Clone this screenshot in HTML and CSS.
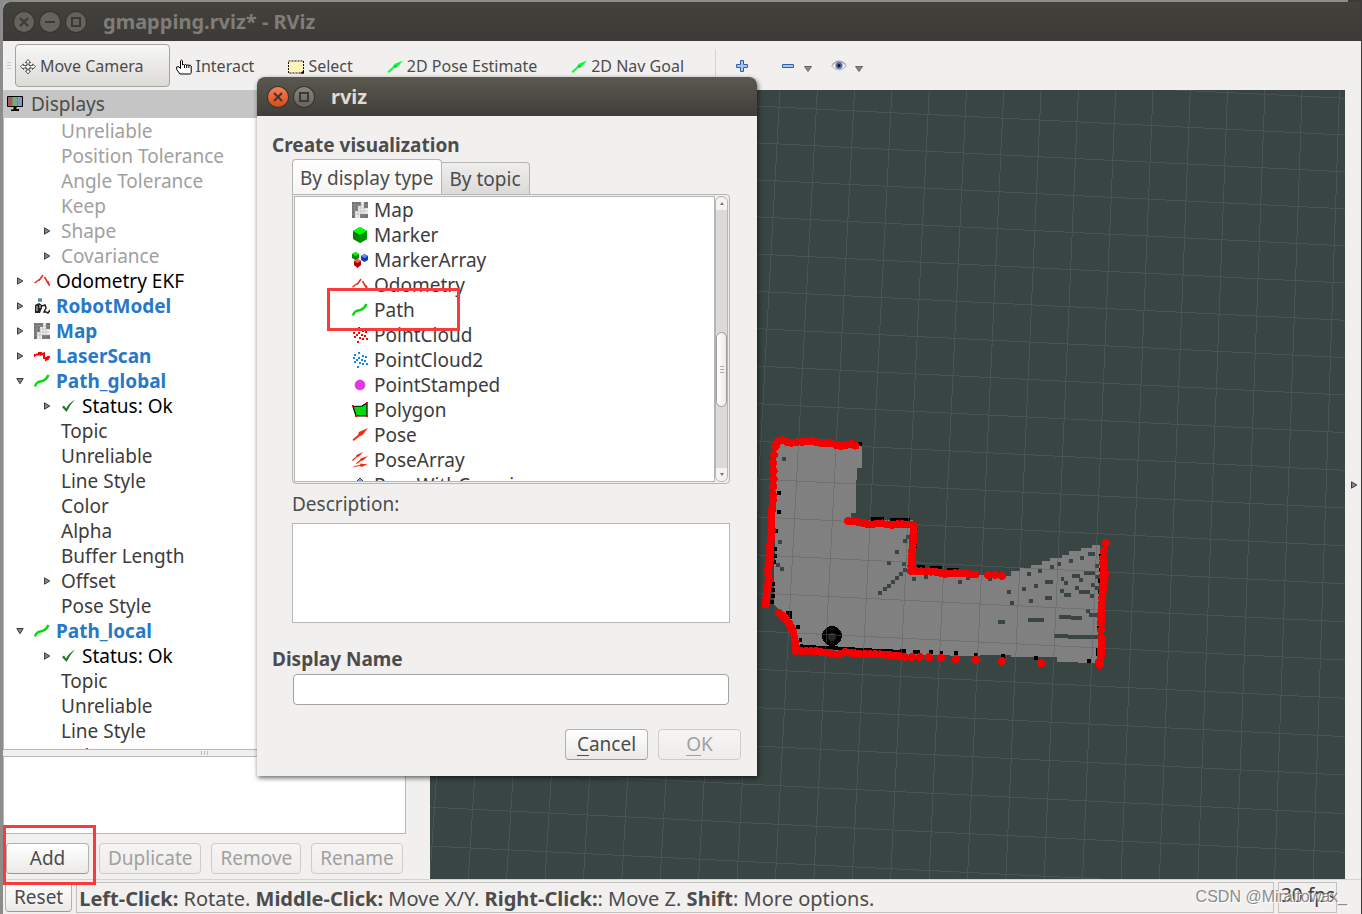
FILE: index.html
```
<!DOCTYPE html>
<html lang="en">
<head>
    <meta charset="UTF-8">
    <meta name="viewport" content="width=device-width, initial-scale=1.0">
    <title>gmapping.rviz* - RViz</title>
    <link rel="stylesheet" href="styles.css">
</head>
<body>
    <!-- icon set -->
    <svg class="defs" aria-hidden="true">
        <symbol id="i-close" viewBox="0 0 20 20"><path d="M6 6l8 8M14 6l-8 8" fill="none" stroke="currentColor" stroke-width="2"/></symbol>
        <symbol id="i-min" viewBox="0 0 20 20"><path d="M5 10h10" fill="none" stroke="currentColor" stroke-width="2"/></symbol>
        <symbol id="i-max" viewBox="0 0 20 20"><path d="M6 6h8v8H6z" fill="none" stroke="currentColor" stroke-width="2"/></symbol>
        <symbol id="i-right" viewBox="0 0 8 8"><path d="M1.5 .8v6.4L6.800 4z" fill="#888" stroke="#3c3c3c"/></symbol>
        <symbol id="i-down" viewBox="0 0 8 8"><path d="M.8 1.500h6.400L4 6.800z" fill="#888" stroke="#3c3c3c"/></symbol>
        <symbol id="i-move" viewBox="0 0 16 16"><path d="M8 .5L5.500 3.500h1.500V6.500H3.500V5L.5 7.500l3 3V9H7v3H5.500L8 15l2.500-3H9V9h3.500v1.500l3-3-3-2.500v1.500H9V3.500h1.500z" fill="#fff" stroke="#333" stroke-width=".8"/><circle cx="8" cy="8" r="2.500" fill="none" stroke="#555" stroke-width=".7"/></symbol>
        <symbol id="i-hand" viewBox="0 0 16 16"><path d="M4.500 9.500V1.800q1-1.600 2 0V6q1-1 2 0 1-.8 2.200.2 1.100-.8 2.200.2 1.500-.7 2.300.6v6.500q0 1.500-1.500 1.500H4L.7 10.500V8q1.300-.8 2.300 0z" fill="#fff" stroke="#000"/><path d="M8.500 6v3M10.700 6.200V9M12.900 6.400V9" stroke="#000"/></symbol>
        <symbol id="i-select" viewBox="0 0 16 16"><path d="M.5 2h15v12H.5z" fill="#fdf3bb" stroke="#111" stroke-dasharray="2 1"/><path d="M12 14.500h4V11z"/></symbol>
        <symbol id="i-goal" viewBox="0 0 16 16"><path d="M.5 12.500L6 7.500l1-.5.500-2L16 1.500 10.500 8l-2.500.5L1.500 14z" fill="#0f3"/><path d="M7 6.500l2 2" stroke="#085020"/></symbol>
        <symbol id="i-plus" viewBox="0 0 16 16"><path d="M6.500 2.500h3v4h4v3h-4v4h-3v-4h-4v-3h4z" fill="#a9c6ea" stroke="#2d62ab"/></symbol>
        <symbol id="i-minus" viewBox="0 0 16 16"><path d="M2.500 6.500h11v3h-11z" fill="#a9c6ea" stroke="#2d62ab"/></symbol>
        <symbol id="i-eye" viewBox="0 0 16 16"><path d="M.5 8Q8-1 15.500 8 8 16 .5 8z" fill="#eee" stroke="#b5b5b5"/><circle cx="8" cy="7.500" r="3.500" fill="#5b6cae"/><circle cx="8" cy="7.500" r="1.500" fill="#111"/><path d="M1 6.500Q8-.5 15 6.500" fill="none" stroke="#999"/></symbol>
        <symbol id="i-caret" viewBox="0 0 8 8"><path d="M.5 1.500h7L4 6.500z" fill="#888" stroke="#666"/></symbol>
        <symbol id="i-displays" viewBox="0 0 16 16"><path d="M.5.5h15v10H.5z" fill="#a35c5c" stroke="#000"/><path d="M5.500 1H10v9H5.500z" fill="#69b569"/><path d="M10.500 1H15v9h-4.500z" fill="#8e8ed2"/><path d="M6.500 11h3v2h2.500v2H4v-1.500h2.500z"/></symbol>
        <symbol id="i-odom" viewBox="0 0 16 16"><path d="M.5 10L6 6M5 7.500l4-5.500M10.500 4L15.500 12.500" fill="none" stroke="#f32a12" stroke-width="1.500"/><path d="M11.500 7.500l4.500 6-1-5z" fill="#f32a12"/></symbol>
        <symbol id="i-robot" viewBox="0 0 16 16"><path d="M4 .5h4v3H4z" fill="#223f86"/><path d="M4 2h4" stroke="#9fc3ee"/><path d="M1 7l4-2 3 2v3l-2 5H1z" fill="#222"/><path d="M3 8v5M6 7v3" stroke="#ddd"/><path d="M8 8l3-1 1 3-2 4h2l2 1 2-3" fill="none" stroke="#222" stroke-width="1.500"/></symbol>
        <symbol id="i-map" viewBox="0 0 16 16"><path d="M0 0h16v16H0z" fill="#f0f0f0"/><path d="M0 0h9v4H6v5H3v7H0zM12 0h4v6h-4zM8 12h8v4H8z" fill="#707070"/><path d="M3 0v16M6 0v16M9 0v16M12 0v16M0 3h16M0 6h16M0 9h16M0 12h16" stroke="#aaa" stroke-width=".5"/></symbol>
        <symbol id="i-laser" viewBox="0 0 16 16"><path d="M0 9V7h2M2 6.500h3V5h2v1.500l3-1V10h2v2l2-1V9h2" fill="none" stroke="red" stroke-width="2"/></symbol>
        <symbol id="i-path" viewBox="0 0 16 16"><path d="M1 13.500C3 7 6 9.500 9.500 7.500 12 6.500 13 5 14.500 2" fill="none" stroke="#00dc0a" stroke-width="2.500"/></symbol>
        <symbol id="i-ok" viewBox="0 0 16 16"><path d="M1 9l2-1.500L5 10.500Q8 5 14 1.500 9 6.500 5.500 14z" fill="#1f7a26"/></symbol>
        <symbol id="i-marker" viewBox="0 0 16 16"><path d="M8 0l7 4v8l-7 4-7-4V4z" fill="#008200"/><path d="M8 0l7 4-7 4-7-4z" fill="#0f0"/><path d="M8 8l7-4v8l-7 4z" fill="#009600"/></symbol>
        <symbol id="i-markers" viewBox="0 0 16 16"><path d="M3.500 0L7 2v4L3.500 8 0 6V2z" fill="#008c00"/><path d="M3.500 0L7 2 3.500 4 0 2z" fill="#0f0"/><path d="M12.500 2L16 4v4l-3.500 2L9 8V4z" fill="#1338b8"/><path d="M12.500 2L16 4l-3.500 2L9 4z" fill="#5c8cff"/><path d="M5.500 7L9 9v4l-3.500 3L2 13V9z" fill="#b00000"/><path d="M5.500 7L9 9l-3.500 2L2 9z" fill="#ff5a5a"/></symbol>
        <symbol id="i-cloud" viewBox="0 0 16 16"><path d="M6 1h2M2 3h2M10 4h2M1 6h2M6 6h2M13 5h2M4 8h2M9 8h2M2 10h2M12 9h2M7 11h2M10 12h2M14 12h2M5 15h2" stroke="currentColor" stroke-width="2"/></symbol>
        <symbol id="i-point" viewBox="0 0 16 16"><circle cx="8" cy="8" r="5" fill="#e935e9" stroke="#c22bc2" stroke-width=".6"/></symbol>
        <symbol id="i-polygon" viewBox="0 0 16 16"><path d="M1 4.500l9-.5 5-3v13H4z" fill="#00dc0a" stroke="#000" stroke-width="1.200"/><path d="M0 4h2M14 1h2M3 14h2M14 14h2" stroke="red" stroke-width="2"/></symbol>
        <symbol id="i-pose" viewBox="0 0 16 16"><path d="M.5 12.500L6 8l1-3 9-4-5.500 7L8 9l-6.500 5z" fill="#f32a12"/></symbol>
        <symbol id="i-poses" viewBox="0 0 16 16"><path d="M0 8l4-3.500.5-1.500L11 0 7 4.500l-2 .5-4 4zM4 11l4-3 .5-1.500L16 4l-5 4.500-2 .5-4.500 3zM2 14l6-1 .5-1.500 7 1-6 2.500-1.500-1-6 1z" fill="#f32a12"/></symbol>
        <symbol id="i-cov" viewBox="0 0 16 16"><path d="M8 1l6 6-6 6-6-6z" fill="#8fa2cc" stroke="#31487f"/></symbol>
    </svg>

    <div class="window">
        <header class="titlebar">
            <button class="wm" aria-label="Close"><svg><use href="#i-close"/></svg></button>
            <button class="wm" aria-label="Minimize"><svg><use href="#i-min"/></svg></button>
            <button class="wm" aria-label="Maximize"><svg><use href="#i-max"/></svg></button>
            <h1>gmapping.rviz* - RViz</h1>
        </header>

        <div class="toolbar">
            <span class="handle"></span>
            <button class="tool active"><svg class="icon"><use href="#i-move"/></svg>Move Camera</button>
            <button class="tool"><svg class="icon"><use href="#i-hand"/></svg>Interact</button>
            <button class="tool"><svg class="icon"><use href="#i-select"/></svg>Select</button>
            <button class="tool"><svg class="icon"><use href="#i-goal"/></svg>2D Pose Estimate</button>
            <button class="tool"><svg class="icon"><use href="#i-goal"/></svg>2D Nav Goal</button>
            <span class="separator"></span>
            <button class="tool small" aria-label="Add tool"><svg class="icon"><use href="#i-plus"/></svg></button>
            <button class="tool small" aria-label="Remove tool"><svg class="icon"><use href="#i-minus"/></svg><svg class="caret"><use href="#i-caret"/></svg></button>
            <button class="tool small" aria-label="Visibility"><svg class="icon"><use href="#i-eye"/></svg><svg class="caret"><use href="#i-caret"/></svg></button>
        </div>

        <main class="main">
            <section class="displays">
                <h2 class="panel-title"><svg class="icon"><use href="#i-displays"/></svg>Displays</h2>
                <ul class="tree">
                    <li class="child off">Unreliable</li>
                    <li class="child off">Position Tolerance</li>
                    <li class="child off">Angle Tolerance</li>
                    <li class="child off">Keep</li>
                    <li class="child off"><button class="toggle" aria-label="Expand"><svg><use href="#i-right"/></svg></button>Shape</li>
                    <li class="child off"><button class="toggle" aria-label="Expand"><svg><use href="#i-right"/></svg></button>Covariance</li>
                    <li class="top plain"><button class="toggle" aria-label="Expand"><svg><use href="#i-right"/></svg></button><svg class="icon"><use href="#i-odom"/></svg>Odometry EKF</li>
                    <li class="top"><button class="toggle" aria-label="Expand"><svg><use href="#i-right"/></svg></button><svg class="icon"><use href="#i-robot"/></svg>RobotModel</li>
                    <li class="top"><button class="toggle" aria-label="Expand"><svg><use href="#i-right"/></svg></button><svg class="icon"><use href="#i-map"/></svg>Map</li>
                    <li class="top"><button class="toggle" aria-label="Expand"><svg><use href="#i-right"/></svg></button><svg class="icon"><use href="#i-laser"/></svg>LaserScan</li>
                    <li class="top"><button class="toggle" aria-label="Collapse"><svg><use href="#i-down"/></svg></button><svg class="icon"><use href="#i-path"/></svg>Path_global</li>
                    <li class="child status"><button class="toggle" aria-label="Expand"><svg><use href="#i-right"/></svg></button><svg class="icon"><use href="#i-ok"/></svg>Status: Ok</li>
                    <li class="child">Topic</li>
                    <li class="child">Unreliable</li>
                    <li class="child">Line Style</li>
                    <li class="child">Color</li>
                    <li class="child">Alpha</li>
                    <li class="child">Buffer Length</li>
                    <li class="child"><button class="toggle" aria-label="Expand"><svg><use href="#i-right"/></svg></button>Offset</li>
                    <li class="child">Pose Style</li>
                    <li class="top"><button class="toggle" aria-label="Collapse"><svg><use href="#i-down"/></svg></button><svg class="icon"><use href="#i-path"/></svg>Path_local</li>
                    <li class="child status"><button class="toggle" aria-label="Expand"><svg><use href="#i-right"/></svg></button><svg class="icon"><use href="#i-ok"/></svg>Status: Ok</li>
                    <li class="child">Topic</li>
                    <li class="child">Unreliable</li>
                    <li class="child">Line Style</li>
                    <li class="child">Color</li>
                </ul>
                <div class="splitter"><i></i><i></i><i></i></div>
                <div class="help-box"></div>
                <div class="actions">
                    <button class="btn">Add</button>
                    <button class="btn" disabled>Duplicate</button>
                    <button class="btn" disabled>Remove</button>
                    <button class="btn" disabled>Rename</button>
                    <span class="mark mark-add"></span>
                </div>
            </section>

            <svg class="view" viewBox="430 90 915 789" preserveAspectRatio="xMidYMid slice">
                <!-- free space -->
                <path fill="#808080" d="M776 443H862V468H857V480H856V513H851V520H913V572L1003 576 1011 576V571H1020V568H1031V565H1042V561H1050V558H1062V555H1069V551H1081V548H1092V545H1100L1098 663H1078V662H1057V657H1011V655H980V656L920 655 800 652 796 632 783 614 774 605Z"/>
                <!-- unknown cells -->
                <path class="cells unknown" d="M782 459h4M778 542h4M776 565h4M780 569h4M895 552h4M903 541h4M906 537h4M887 563h4M902 564h4M903 570h4M899 574h4M895 578h4M891 582h4M887 586h4M883 589h4M878 593h4M912 579h4M924 577h4M958 582h4M966 578h4M988 579h4M1007 592h4M1010 603h4M1022 589h4M1027 574h4M1034 586h4M1038 571h4M1029 601h4M1050 567h4M1057 564h4M1069 561h4M1080 558h4M1088 554h7M1045 582h8M1045 598h7M1061 579h3M1064 583h4M1072 576h8M1079 580h4M1060 591h4M1064 595h7M1075 588h4M1079 592h11M1091 585h4M1090 596h4M1084 573h11M1095 566h4M1095 577h4M1095 588h4M998 622h7M1028 620h16M1059 617h12M1071 618h11M1086 611h4M1089 615h9M1054 636h14M1068 637h30"/>
                <!-- obstacles -->
                <path class="cells wall" d="M858 444h4M777 493h4M777 512h4M775 531h3M774 549h3M774 556h3M773 562h3M771 584h4M771 590h4M771 596h4M770 602h4M786 613h6M788 617h4M796 627h4M799 640h3M800 646h3M870 519h14M890 520h20M915 530h3M914 546h3M917 567h8M930 568h12M947 570h12M1001 574h3M900 651h6M913 652h7M929 652h4M940 653h3M954 653h4M974 655h4M1001 656h4M1034 658h4M1087 661h4M1099 556h3M1099 570h3M1098 581h3M1098 592h3M1098 604h3M1097 616h3M1097 628h3M1096 650h3M1096 654h3"/>
                <path fill="none" stroke="#000" stroke-width="4" d="M802 647L830 648 880 651 905 652"/>
                <circle cx="832" cy="636" r="10"/>
                <circle cx="832" cy="637" r="4" fill="#252722"/>
                <path id="grid" class="grid"/>
                <!-- laser scan -->
                <g class="scan">
                    <path d="M776 446L778 441 784 440 789 443 800 442 811 441 820 443 830 443 840 446 850 444 857 446"/>
                    <path class="sparse" d="M775 447L774 456 773 464 774 474 773 490 773 500"/>
                    <path d="M773 500L771 520 772 530 770 545 770 560 768 570 769 580 767 590 766 600 766 607"/>
                    <path d="M779 613L785 618 791 626 794 635 796 645 796 651"/>
                    <path d="M796 651L815 651 830 653 838 655 845 652 860 654 875 654 890 655 905 657"/>
                    <path d="M848 521L860 522 870 525 880 523 890 525 900 524 914 525"/>
                    <path d="M914 526L913 540 912 555 911 571"/>
                    <path d="M911 571L940 572 942 574 960 573 980 575"/>
                    <path class="single" d="M988 575h0M995 575h0M1002 576h0M912 657h0M920 657h0M929 657h0M941 658h0M956 659h0M976 660h0M1002 661h0M1041 663h0"/>
                    <path class="sparse" d="M1106 543L1103 555 1105 574 1103 592 1101 612 1101 632 1102 649 1099 662"/>
                    <path d="M1103 558L1104 580 1102 600 1101 625M1102 640L1100 666"/>
                </g>
            </svg>
            <button class="side-toggle" aria-label="Show panel"><svg><use href="#i-right"/></svg></button>
        </main>

        <footer class="statusbar">
            <button class="btn reset">Reset</button>
            <p class="hint"><b>Left-Click:</b> Rotate. <b>Middle-Click:</b> Move X/Y. <b>Right-Click:</b>: Move Z. <b>Shift</b>: More options.</p>
            <span class="fps">30 fps</span>
            <span class="watermark">CSDN @Miraitowax_</span>
        </footer>
    </div>

    <div class="dialog" role="dialog" aria-labelledby="dialog-title">
        <header class="titlebar focused">
            <button class="wm close" aria-label="Close"><svg><use href="#i-close"/></svg></button>
            <button class="wm" aria-label="Maximize"><svg><use href="#i-max"/></svg></button>
            <h2 id="dialog-title">rviz</h2>
        </header>
        <form class="dialog-body">
            <h3>Create visualization</h3>
            <div class="group">
                <div class="tabs" role="tablist">
                    <button type="button" class="tab selected" role="tab" aria-selected="true">By display type</button>
                    <button type="button" class="tab" role="tab" aria-selected="false">By topic</button>
                </div>
                <div class="tab-page">
                    <ul class="types">
                        <li><svg class="icon"><use href="#i-map"/></svg>Map</li>
                        <li><svg class="icon"><use href="#i-marker"/></svg>Marker</li>
                        <li><svg class="icon"><use href="#i-markers"/></svg>MarkerArray</li>
                        <li><svg class="icon"><use href="#i-odom"/></svg>Odometry</li>
                        <li><svg class="icon"><use href="#i-path"/></svg>Path<span class="mark mark-path"></span></li>
                        <li><svg class="icon red"><use href="#i-cloud"/></svg>PointCloud</li>
                        <li><svg class="icon blue"><use href="#i-cloud"/></svg>PointCloud2</li>
                        <li><svg class="icon"><use href="#i-point"/></svg>PointStamped</li>
                        <li><svg class="icon"><use href="#i-polygon"/></svg>Polygon</li>
                        <li><svg class="icon"><use href="#i-pose"/></svg>Pose</li>
                        <li><svg class="icon"><use href="#i-poses"/></svg>PoseArray</li>
                        <li><svg class="icon"><use href="#i-cov"/></svg>PoseWithCovariance</li>
                    </ul>
                    <div class="scrollbar">
                        <span class="step up"></span>
                        <span class="thumb"><i></i><i></i><i></i></span>
                        <span class="step down"></span>
                    </div>
                </div>
                <label for="description">Description:</label>
                <textarea id="description" readonly></textarea>
            </div>
            <h3><label for="display-name">Display Name</label></h3>
            <div class="group">
                <input type="text" id="display-name">
            </div>
            <div class="dialog-buttons">
                <button type="button" class="btn"><u>C</u>ancel</button>
                <button type="submit" class="btn" disabled><u>O</u>K</button>
            </div>
        </form>
    </div>

    <script src="grid.js"></script>
</body>
</html>
```
FILE: styles.css
```
* {
    box-sizing: border-box;
}
body {
    margin: 0;
    height: 100vh;
    padding: 2px 1px 0 3px;
    overflow: hidden;
    background: linear-gradient(to right, #8c8c8c 99%, #3c3b37 99%);
    font-family: "Noto Sans", "Open Sans", sans-serif;
    font-size: 19px;
    line-height: 25px;
    color: #4c4c4c;
}
h1, h2, h3, p, ul {
    margin: 0;
    padding: 0;
    list-style: none;
}
button, input, textarea {
    font: inherit;
    color: inherit;
}
svg {
    display: block;
    flex: none;
}
.defs {
    position: absolute;
    width: 0;
    height: 0;
}
.icon {
    width: 16px;
    height: 16px;
}
.window {
    height: 100%;
    display: flex;
    flex-direction: column;
    background: #f1f0ee;
    border-top-left-radius: 6px;
}

/* title bars */
.titlebar {
    display: flex;
    align-items: center;
    gap: 6px;
    height: 39px;
    padding: 0 11px;
    background: linear-gradient(#42413c, #3c3b37);
    border-radius: 7px 0 0 0;
    color: #807d78;
}
.titlebar h1, .titlebar h2 {
    margin-left: 11px;
    font-size: 20px;
    font-weight: bold;
    line-height: 24px;
}
.wm {
    width: 20px;
    height: 20px;
    padding: 0;
    border: 0;
    border-radius: 50%;
    background: #64625d;
    box-shadow: 0 0 0 1px #35342f;
    color: #3a3935;
}
.wm svg {
    width: 20px;
    height: 20px;
}
.titlebar.focused {
    background: linear-gradient(#5b584f, #3f3e39);
    border-radius: 8px 8px 0 0;
    color: #dfdbd2;
}
.focused .wm {
    background: linear-gradient(#87857e, #65635d);
}
.focused .close {
    background: linear-gradient(#f5805b, #dd4814);
}

/* toolbar */
.toolbar {
    display: flex;
    align-items: center;
    height: 49px;
    padding: 0 4px;
}
.handle {
    width: 4px;
    height: 8px;
    margin-right: 4px;
    background: repeating-linear-gradient(#ccc 0 1px, transparent 1px 3px);
}
.tool {
    display: flex;
    align-items: center;
    gap: 4px;
    height: 43px;
    padding: 2px 27px 0 5px;
    border: 1px solid transparent;
    border-radius: 4px;
    background: none;
    font-size: 16px;
    white-space: nowrap;
}
.tool.active {
    padding: 2px 25px 0 4px;
    border-color: #a5a39f;
    background: linear-gradient(#f8f8f7, #dcdad7);
}
.separator {
    height: 33px;
    margin: 0 13px 0 3px;
    border-left: 1px solid #d5d3d0;
}
.tool.small {
    gap: 8px;
    padding: 0 13px 0 4px;
}
.tool.small:nth-last-child(3) {
    padding-right: 24px;
}
.caret {
    width: 8px;
    height: 8px;
    margin-top: 6px;
}

/* displays panel */
.main {
    flex: 1;
    min-height: 0;
    display: flex;
}
.displays {
    width: 427px;
    padding-right: 24px;
    display: flex;
    flex-direction: column;
}
.panel-title {
    display: flex;
    align-items: center;
    gap: 8px;
    height: 28px;
    padding-left: 4px;
    background: #c5c5c5;
    font-size: 19px;
    font-weight: normal;
}
.tree {
    flex: 1;
    min-height: 0;
    overflow: hidden;
    border: 1px solid #bab8b5;
    border-top: 0;
    background: #fff;
    color: #3c3c3c;
}
.tree li, .types li {
    display: flex;
    align-items: center;
    height: 25px;
    padding-top: 2px;
    white-space: nowrap;
}
.tree .icon, .types .icon, .toggle {
    margin-top: -2px;
}
.tree .top {
    gap: 6px;
    padding-left: 12px;
    font-weight: bold;
    color: #2878c8;
}
.tree .top .toggle {
    margin-right: 4px;
}
.tree .top.plain {
    font-weight: normal;
    color: #000;
}
.tree .child {
    padding-left: 57px;
}
.tree .child .toggle {
    margin-left: -18px;
    margin-right: 10px;
}
.tree .off {
    color: #a0a0a0;
}
.tree .status {
    color: #000;
}
.tree .status .icon {
    margin-right: 5px;
}
.toggle {
    width: 8px;
    height: 8px;
    padding: 0;
    border: 0;
    background: none;
}
.toggle svg {
    width: 8px;
    height: 8px;
}
.splitter {
    display: flex;
    align-items: center;
    justify-content: center;
    gap: 2px;
    height: 6px;
}
.splitter i {
    width: 1px;
    height: 4px;
    background: #bbb;
}
.help-box {
    height: 78px;
    border: 1px solid #bab8b5;
    background: #fff;
}
.actions {
    position: relative;
    display: flex;
    gap: 10px;
    padding: 9px 3px 5px;
}
.btn {
    height: 31px;
    min-width: 83px;
    padding: 0 8px;
    border: 1px solid #b4b2af;
    border-bottom-color: #9c9a97;
    border-radius: 4px;
    background: linear-gradient(#fff, #ebeae8);
    line-height: 29px;
}
.btn:disabled {
    border-color: #cfcdca;
    background: linear-gradient(#f6f5f4, #eeedeb);
    color: #a0a0a0;
}
.mark {
    position: absolute;
    z-index: 2;
    border: 3px solid #fb3b3b;
    pointer-events: none;
}
.mark-add {
    left: 0;
    top: -9px;
    width: 93px;
    height: 60px;
}

/* 3D view */
.view {
    flex: 1;
    min-width: 0;
    height: 100%;
    background: #384543;
    shape-rendering: crispEdges;
}
.cells {
    fill: none;
    stroke-width: 4px;
}
.unknown {
    stroke: #384543;
}
.wall {
    stroke: #000;
}
.grid {
    fill: none;
    stroke: #5f5f5f;
    stroke-opacity: 0.5;
}
.scan {
    fill: none;
    stroke: #f40000;
    stroke-width: 8px;
    stroke-linecap: round;
    stroke-dasharray: 0 5;
}
.scan .sparse {
    stroke-dasharray: 0 8;
}
.scan .single {
    stroke-dasharray: none;
}
.side-toggle {
    width: 16px;
    padding: 0 0 0 5px;
    border: 0;
    background: none;
}
.side-toggle svg {
    width: 8px;
    height: 8px;
}

/* status bar */
.statusbar {
    position: relative;
    display: flex;
    gap: 4px;
    height: 35px;
    padding: 2px 24px 1px 2px;
    border-top: 1px solid #d5d3d0;
}
.reset {
    min-width: 0;
    height: 30px;
    line-height: 28px;
}
.hint {
    flex: 1;
    padding: 0 2px;
    border: 1px solid #c4c2bf;
    font-size: 20px;
    line-height: 31px;
    white-space: nowrap;
    overflow: hidden;
}
.fps {
    width: 59px;
    padding-left: 2px;
    border: 1px solid #c4c2bf;
    line-height: 25px;
    color: #3c3c3c;
    white-space: nowrap;
}
.watermark {
    position: absolute;
    right: 14px;
    bottom: 5px;
    font-family: "Liberation Sans", Arial, sans-serif;
    font-size: 16px;
    line-height: 24px;
    color: #8c8c8c;
    text-shadow: 1px 1px 0 #fff;
}

/* create visualization dialog */
.dialog {
    position: absolute;
    left: 257px;
    top: 77px;
    width: 500px;
    border-radius: 8px 8px 0 0;
    background: #f1f0ee;
    box-shadow: 1px 2px 5px rgba(0, 0, 0, 0.6);
}
.dialog-body {
    padding: 16px 16px 16px 15px;
}
.dialog h3 {
    font-size: 19px;
    line-height: 27px;
}
.group {
    display: flex;
    flex-direction: column;
    padding: 0 11px 0 20px;
}
.tabs {
    display: flex;
    align-items: flex-end;
}
.tab {
    height: 32px;
    padding: 2px 8px 0;
    border: 1px solid #b8b6b3;
    border-left: 0;
    border-bottom: 0;
    border-radius: 0 4px 0 0;
    background: linear-gradient(#efeeec, #dcdad8);
}
.tab.selected {
    height: 35px;
    padding: 2px 7px 0;
    border-left: 1px solid #b8b6b3;
    border-radius: 4px 4px 0 0;
    background: linear-gradient(#fff, #f6f5f4);
}
.tab-page {
    display: flex;
    height: 290px;
    padding: 1px;
    border: 1px solid #b8b6b3;
    border-radius: 0 4px 4px 4px;
}
.types {
    flex: 1;
    overflow: hidden;
    border: 1px solid #b8b6b3;
    background: #fff;
    color: #3c3c3c;
}
.types li {
    gap: 6px;
    padding-left: 57px;
}
.types .red {
    color: #f00;
}
.types .blue {
    color: #0f86f0;
}
.mark-path {
    left: 70px;
    top: 211px;
    width: 133px;
    height: 43px;
}
.scrollbar {
    display: flex;
    flex-direction: column;
    width: 13px;
    border: 1px solid #b8b6b3;
    border-radius: 6px;
    background: #dcdad8;
}
.step {
    display: flex;
    align-items: center;
    justify-content: center;
    height: 13px;
    border-radius: 6px 6px 0 0;
    background: #f4f3f2;
}
.step::before {
    content: "";
    border: 2px solid transparent;
    border-bottom: 3px solid #777;
    border-top: 0;
}
.step.down {
    margin-top: auto;
    border-radius: 0 0 6px 6px;
}
.step.down::before {
    border-top: 3px solid #777;
    border-bottom: 0;
}
.thumb {
    display: flex;
    flex-direction: column;
    align-items: center;
    justify-content: center;
    gap: 2px;
    height: 75px;
    margin-top: 122px;
    border: 1px solid #9c9a97;
    border-radius: 6px;
    background: linear-gradient(to right, #fff, #ebeae8);
}
.thumb i {
    width: 4px;
    height: 1px;
    background: #aaa;
}
.group label {
    margin: 8px 0 6px;
    line-height: 25px;
}
textarea {
    height: 100px;
    border: 1px solid #bab8b5;
    background: #fff;
    resize: none;
}
.dialog h3 label {
    display: block;
    padding-top: 23px;
}
input {
    height: 31px;
    margin: 1px;
    border: 1px solid #a5a39f;
    border-radius: 4px;
    background: #fff;
}
.dialog-buttons {
    display: flex;
    justify-content: flex-end;
    gap: 10px;
    margin-top: 23px;
}
.dialog-buttons u {
    text-underline-offset: 4px;
    text-decoration-thickness: 1px;
}
```
FILE: grid.js
```
// ground grid, slightly rotated and seen with a weak perspective
const parts = [];

for (let k = -10; k <= 17; k++) {
    const top = 780 + 37.3 * k;
    const bottom = 737 + 38.4 * k;
    parts.push(`M${top.toFixed(1)} 90L${bottom.toFixed(1)} 879`);
}

for (let m = -2; m <= 21; m++) {
    const y = 90 + 36.8 * m + 0.05 * m * m;
    parts.push(`M430 ${y.toFixed(1)}L1345 ${(y + 45).toFixed(1)}`);
}

document.getElementById('grid').setAttribute('d', parts.join(''));
```
